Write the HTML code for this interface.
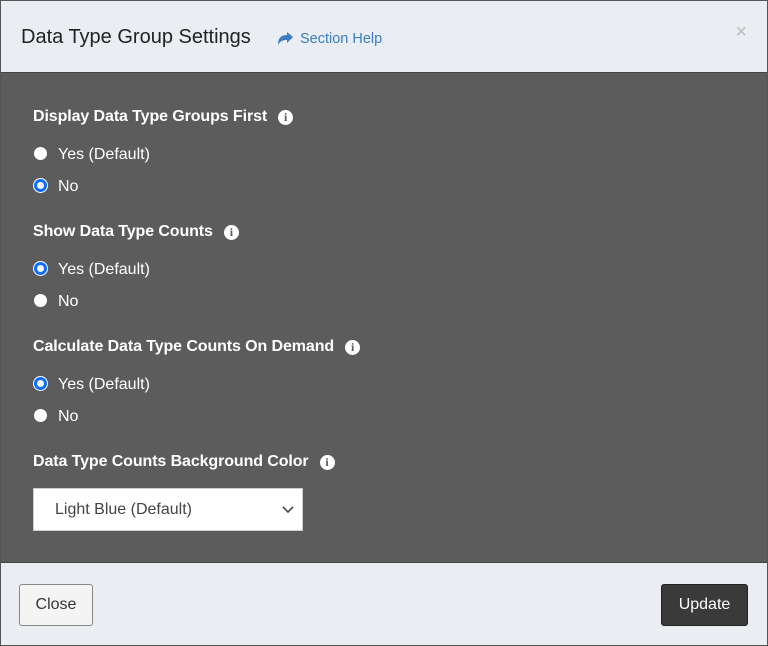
<!DOCTYPE html>
<html><head><style>
*{box-sizing:border-box;margin:0;padding:0}
body{width:768px;height:646px;overflow:hidden;font-family:"Liberation Sans",sans-serif;background:#eaedf2;position:relative}
.frame{position:absolute;inset:0;border:1px solid #555;}
.hdr{position:absolute;left:1px;top:1px;right:1px;height:71px;background:#eaedf2}
.title{position:absolute;left:20px;top:25px;font-size:20px;color:#222}
.help{position:absolute;left:276px;top:30px;font-size:14.5px;color:#3b7dc0}
.help svg{vertical-align:-3px;margin-right:7px}
.x{position:absolute;right:20px;top:20px;font-size:20px;color:#bbb}
.bodyp{position:absolute;left:1px;right:1px;top:72px;height:491px;background:#5c5c5c;border-top:1px solid #444;border-bottom:1px solid #444}
.lab{position:absolute;left:32px;font-size:16px;font-weight:bold;color:#fff;letter-spacing:-0.1px}
.info{display:inline-block;width:15px;height:15px;border-radius:50%;background:#fff;color:#5c5c5c;font-size:12px;text-align:center;line-height:15px;font-family:"Liberation Serif",serif;font-weight:bold;margin-left:11px;vertical-align:0px}
.opt{position:absolute;left:33px;font-size:16px;color:#fff}
.r{display:inline-block;width:13px;height:13px;border-radius:50%;background:#fff;vertical-align:-1px;margin-right:11px}
.r.on{border:3.5px solid #0d6efd;background:#fff;box-shadow:0 0 0 1px #fff}
.sel{position:absolute;left:32px;width:270px;height:43px;background:#fff;border:1px solid #ccc;font-size:16px;color:#444;padding:12px 0 0 21px}
.sel svg{position:absolute;right:8px;top:17px}
.btn{position:absolute;top:584px;height:42px;font-size:16px;border-radius:3px;text-align:center;line-height:40px}
</style></head><body>
<div class="frame"></div>
<div class="hdr">
<div class="title">Data Type Group Settings</div>
<div class="help"><svg width="16" height="14" viewBox="0 0 16 14"><path d="M16 5L10 0v3C4 3 1 6 1 13c2-4 5-5 9-5v3z" fill="#3b7dc0"/></svg>Section Help</div>
<div class="x">×</div>
</div>
<div class="bodyp">
<div class="lab" style="top:35px">Display Data Type Groups First<span class="info">i</span></div>
<div class="opt" style="top:73px"><span class="r"></span>Yes (Default)</div>
<div class="opt" style="top:105px"><span class="r on"></span>No</div>
<div class="lab" style="top:150px">Show Data Type Counts<span class="info">i</span></div>
<div class="opt" style="top:188px"><span class="r on"></span>Yes (Default)</div>
<div class="opt" style="top:220px"><span class="r"></span>No</div>
<div class="lab" style="top:265px">Calculate Data Type Counts On Demand<span class="info">i</span></div>
<div class="opt" style="top:303px"><span class="r on"></span>Yes (Default)</div>
<div class="opt" style="top:335px"><span class="r"></span>No</div>
<div class="lab" style="top:380px">Data Type Counts Background Color<span class="info">i</span></div>
<div class="sel" style="top:415px">Light Blue (Default)<svg width="12" height="8" viewBox="0 0 12 8"><path d="M1 1l5 5 5-5" stroke="#444" stroke-width="1.6" fill="none"/></svg></div>
</div>
<div class="btn" style="left:19px;width:74px;background:#f4f4f4;border:1px solid #888;color:#333">Close</div>
<div class="btn" style="left:661px;width:87px;background:#3a3a3a;border:1px solid #222;color:#fff">Update</div>
</body></html>
